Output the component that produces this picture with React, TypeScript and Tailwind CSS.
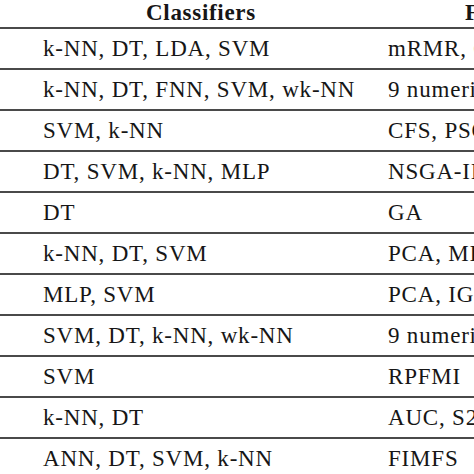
import React from "react";

const rows: [string, string][] = [
  ["k-NN, DT, LDA, SVM", "mRMR, GA"],
  ["k-NN, DT, FNN, SVM, wk-NN", "9 numerical features"],
  ["SVM, k-NN", "CFS, PSO"],
  ["DT, SVM, k-NN, MLP", "NSGA-II"],
  ["DT", "GA"],
  ["k-NN, DT, SVM", "PCA, MI"],
  ["MLP, SVM", "PCA, IG"],
  ["SVM, DT, k-NN, wk-NN", "9 numerical features"],
  ["SVM", "RPFMI"],
  ["k-NN, DT", "AUC, S2"],
  ["ANN, DT, SVM, k-NN", "FIMFS"],
];

export default function App() {
  return (
    <div
      className="w-[474px] h-[474px] overflow-hidden bg-white text-[#161616]"
      style={{ fontFamily: '"Liberation Serif", "Times New Roman", serif' }}
    >
      <div className="w-[700px] text-[23px] tracking-[0.8px] whitespace-nowrap">
        <div className="grid grid-cols-[345px_1fr] h-[29px] border-b-2 border-[#4a4a4a] font-bold leading-none items-start">
          <div className="pl-[146px] pt-[1px] tracking-[0.7px]">Classifiers</div>
          <div className="pl-[120px] pt-[1px] tracking-[0.7px]">Feature Selection</div>
        </div>
        {rows.map(([a, b], i) => (
          <div
            key={i}
            className="grid grid-cols-[345px_1fr] h-[41px] border-b-2 border-[#4a4a4a] items-center leading-none"
          >
            <div className="pl-[43px] whitespace-nowrap">{a}</div>
            <div className="pl-[43px] whitespace-nowrap">{b}</div>
          </div>
        ))}
      </div>
    </div>
  );
}
